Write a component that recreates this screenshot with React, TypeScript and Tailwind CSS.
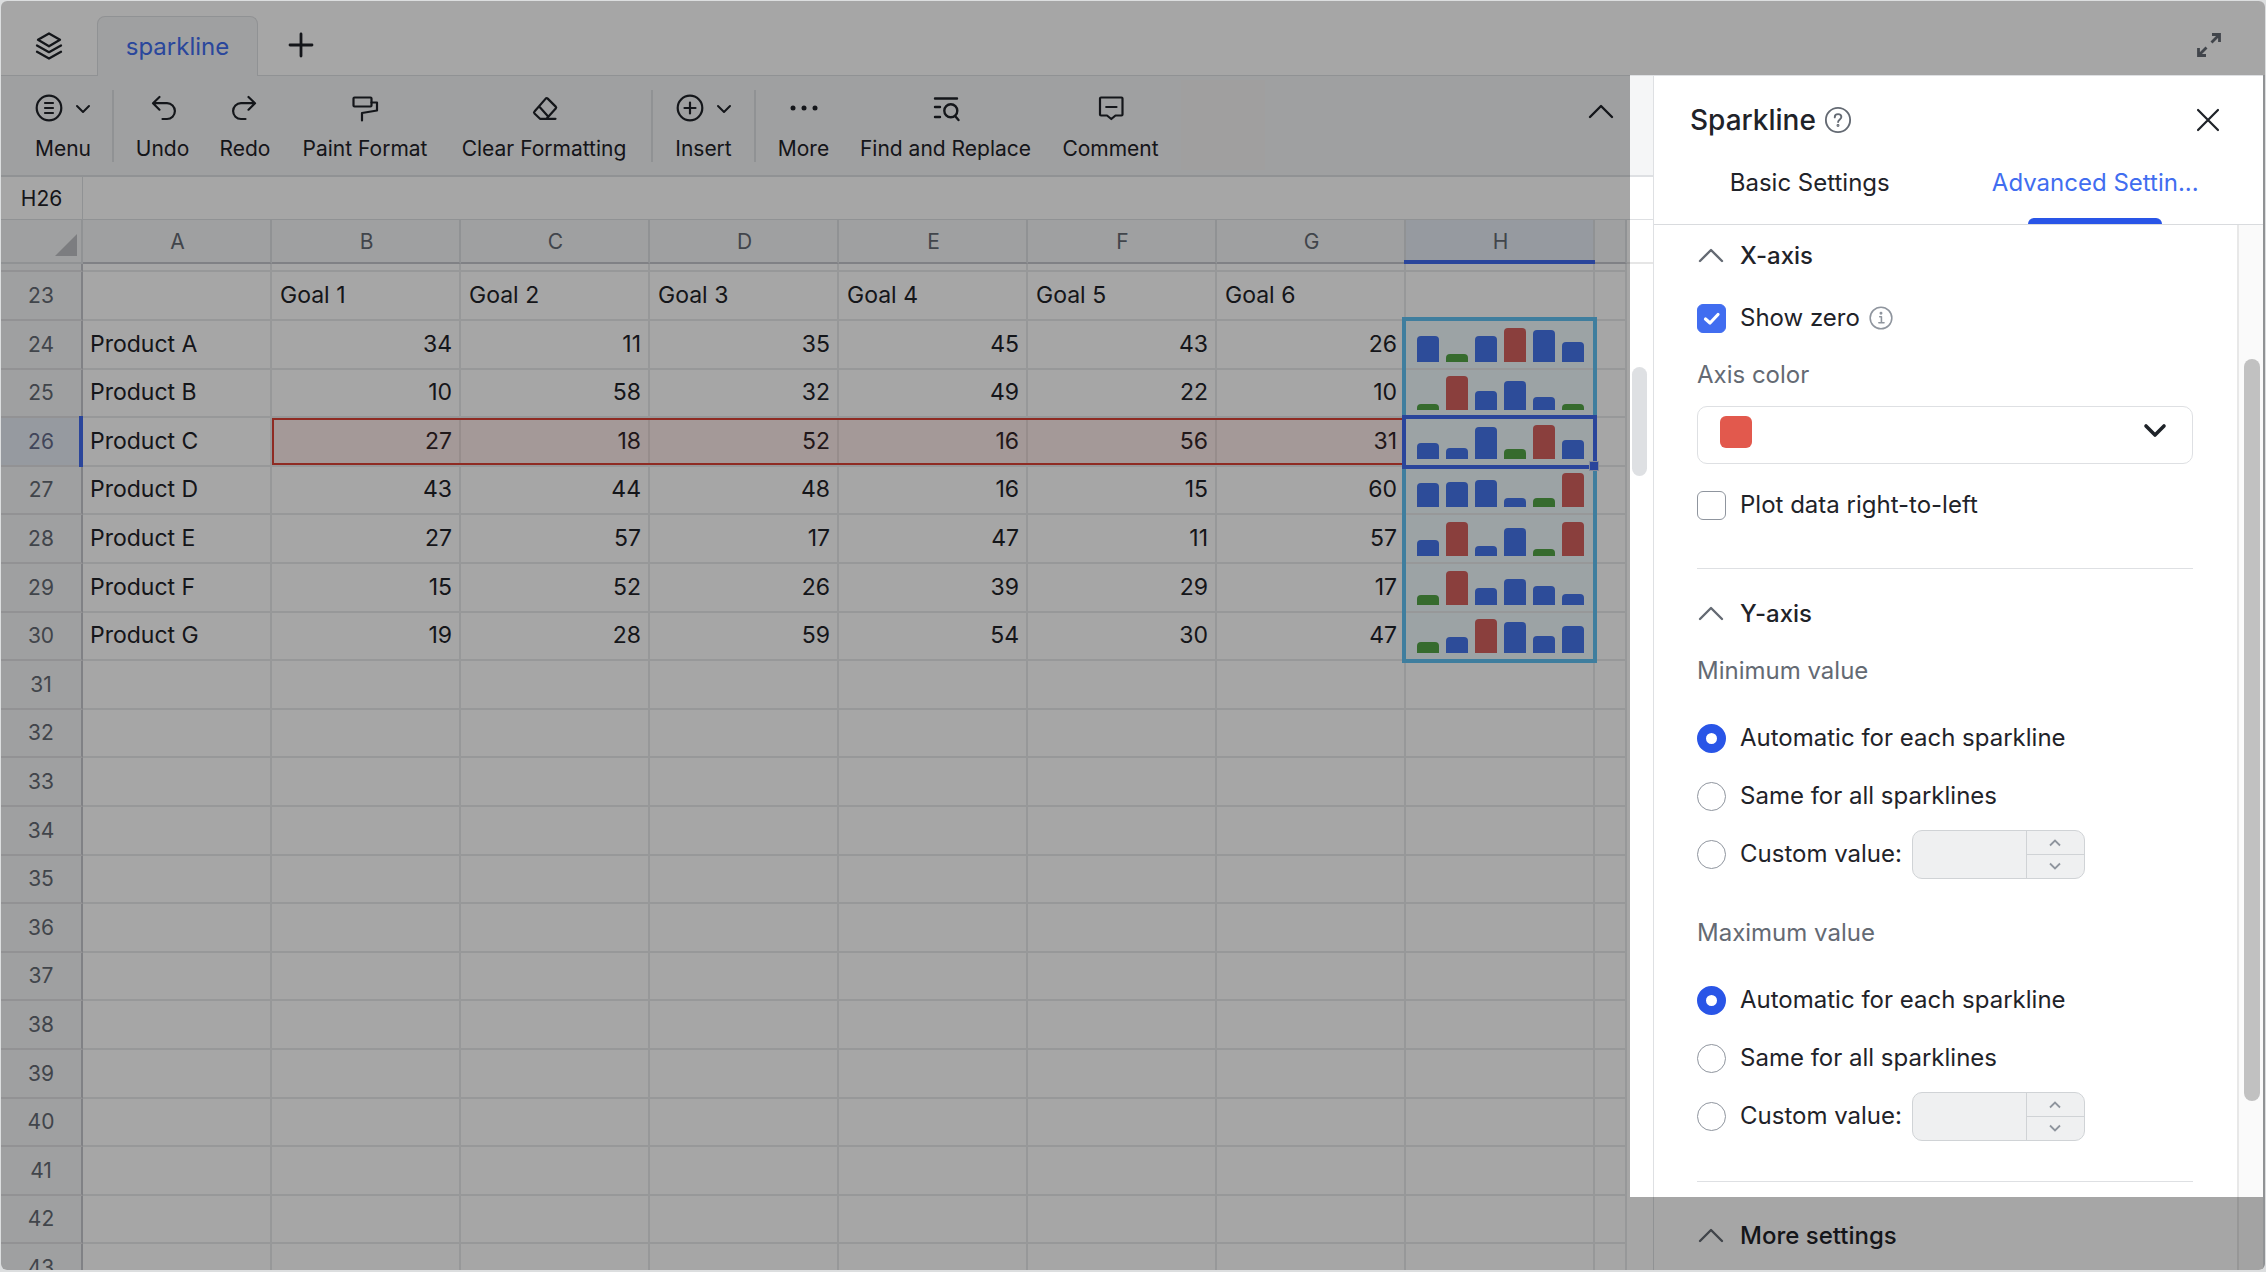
import { useState } from "react";
import type { ReactNode } from "react";
import clsx from "clsx";

const columns = ["A", "B", "C", "D", "E", "F", "G", "H"];

const products = [
  { name: "Product A", values: [34, 11, 35, 45, 43, 26] },
  { name: "Product B", values: [10, 58, 32, 49, 22, 10] },
  { name: "Product C", values: [27, 18, 52, 16, 56, 31] },
  { name: "Product D", values: [43, 44, 48, 16, 15, 60] },
  { name: "Product E", values: [27, 57, 17, 47, 11, 57] },
  { name: "Product F", values: [15, 52, 26, 39, 29, 17] },
  { name: "Product G", values: [19, 28, 59, 54, 30, 47] },
];

const emptyRows = Array.from({ length: 13 }, (_, i) => 31 + i);

function Icon({
  size = 30,
  stroke = 2,
  className,
  children,
}: {
  size?: number;
  stroke?: number;
  className?: string;
  children: ReactNode;
}) {
  return (
    <svg
      width={size}
      height={size}
      viewBox="0 0 30 30"
      fill="none"
      stroke="currentColor"
      strokeWidth={stroke}
      strokeLinecap="round"
      strokeLinejoin="round"
      className={clsx("shrink-0", className)}
      aria-hidden="true"
    >
      {children}
    </svg>
  );
}

function ChevronDown() {
  return (
    <svg width="18" height="12" viewBox="0 0 18 12" fill="none" stroke="currentColor" strokeWidth="2" aria-hidden="true">
      <path d="M3 4l6 6 6-6" strokeLinecap="round" strokeLinejoin="round" />
    </svg>
  );
}

function ChevronUp({ className }: { className?: string }) {
  return (
    <svg
      width="28"
      height="18"
      viewBox="0 0 28 18"
      fill="none"
      stroke="currentColor"
      strokeWidth="2.4"
      strokeLinecap="round"
      strokeLinejoin="round"
      className={className}
      aria-hidden="true"
    >
      <path d="M3 14L14 3l11 11" />
    </svg>
  );
}

function Sparkline({ values }: { values: number[] }) {
  const max = Math.max(...values);
  const min = Math.min(...values);

  return (
    <svg width="167" height="34" viewBox="0 0 167 34" className="ml-[11px] block" aria-hidden="true">
      {values.map((value, i) => {
        const h = Math.round((value / max) * 34);
        const fill = value === max ? "#d4615e" : value === min ? "#53a548" : "#4576eb";
        const x = i * 29;
        return (
          <path
            key={i}
            fill={fill}
            d={`M${x} 34V${34 - h + 4}q0-4 4-4h14q4 0 4 4V34z`}
          />
        );
      })}
    </svg>
  );
}

function Tool({
  label,
  width,
  menu,
  children,
}: {
  label: string;
  width: string;
  menu?: boolean;
  children: ReactNode;
}) {
  return (
    <button type="button" className={clsx("flex flex-col items-center gap-[13px]", width)}>
      <span className={clsx("flex h-[30px] items-center", menu && "gap-[10px]")}>
        {children}
        {menu && <ChevronDown />}
      </span>
      <span className="whitespace-nowrap text-[21px] leading-[26px]">{label}</span>
    </button>
  );
}

function Separator() {
  return <div className="mt-[14px] h-[72px] w-[2px] bg-[#dee0e3]" />;
}

function Toolbar() {
  return (
    <div className="flex h-[101px] border-b-2 border-[#dee0e3] bg-[#f5f6f7]">
      <div className="flex flex-1 items-start pl-[35px]">
        <div className="flex gap-[22px]">
          <div className="pt-[17px]">
            <Tool label="Menu" width="w-[54px]" menu>
              <Icon stroke={2.2}>
                <circle cx="15" cy="15" r="12.3" />
                <path d="M11 10h8M11 15h8M11 20h8" />
              </Icon>
            </Tool>
          </div>
          <Separator />
          <div className="flex gap-[30px] pt-[17px]">
            <Tool label="Undo" width="w-[53px]">
              <Icon stroke={2.2}>
                <path d="M11.5 4L5 10.2l6.500 6.500M5.500 10.200H19a7.900 7.900 0 0 1 0 15.800h-4.500" />
              </Icon>
            </Tool>
            <Tool label="Redo" width="w-[52px]">
              <Icon stroke={2.2}>
                <path d="M18.500 4L25 10.200l-6.500 6.500M24.500 10.200H11a7.900 7.900 0 0 0 0 15.800h4.500" />
              </Icon>
            </Tool>
            <Tool label="Paint Format" width="w-[128px]">
              <Icon stroke={2.2}>
                <rect x="3.500" y="4.500" width="18" height="9" rx="1" />
                <path d="M21.500 9.500h5.500v8l-15 2.500v7.500" />
              </Icon>
            </Tool>
            <Tool label="Clear Formatting" width="w-[170px]">
              <Icon stroke={2.2}>
                <path d="M16.700 5.600q1-1 2 0l8 8q1 1 0 2L17.500 25.800H11L5.500 20.500q-1-1 0-2z M10.200 13.500l8.500 9.500M11 25.800h15.500" />
              </Icon>
            </Tool>
          </div>
          <Separator />
          <div className="pt-[17px]">
            <Tool label="Insert" width="w-[57px]" menu>
              <Icon stroke={2.2}>
                <circle cx="15" cy="15" r="12.3" />
                <path d="M15 9.500v11M9.500 15h11" />
              </Icon>
            </Tool>
          </div>
          <Separator />
          <div className="flex gap-[30px] pt-[17px]">
            <Tool label="More" width="w-[51px]">
              <Icon className="fill-current stroke-none">
                <circle cx="4" cy="15" r="2.500" />
                <circle cx="15" cy="15" r="2.500" />
                <circle cx="26" cy="15" r="2.500" />
              </Icon>
            </Tool>
            <Tool label="Find and Replace" width="w-[173px]">
              <Icon stroke={2.4}>
                <path d="M4 5.500h22M4 14h5M4 24h5M24.500 23.500l3 3.500" />
                <circle cx="19.800" cy="17.800" r="6.500" />
              </Icon>
            </Tool>
            <Tool label="Comment" width="w-[97px]">
              <Icon stroke={2.2}>
                <path d="M5 4.500h20.500a1 1 0 0 1 1 1V21.500a1 1 0 0 1-1 1h-6l-4.200 3.500-4.300-3.500H5a1 1 0 0 1-1-1V5.500a1 1 0 0 1 1-1z M10.200 14h10.300" />
              </Icon>
            </Tool>
          </div>
          <div className="mt-1 h-[90px] w-[84px] bg-[#f6f5f4]" />
        </div>
      </div>
      <button type="button" aria-label="Collapse toolbar" className="mr-[38px] self-start pt-[27px]">
        <ChevronUp />
      </button>
    </div>
  );
}

const cell = "relative border-r-2 border-b-2 border-[#e9eaeb] p-0";
const rowHead = "relative border-r-2 border-b-2 border-b-[#e0e1e3] border-r-[#c5c6cc] p-0 text-center text-[21px] font-normal";

// Row heights cycle so that five rows take 243px.
const heightOf = (row: number) => ((row - 24) % 5 === 1 || (row - 24) % 5 === 3 ? "h-12" : "h-[49px]");

function Sheet() {
  return (
    <div className="flex min-h-0 flex-1">
      <div className="min-w-0 flex-1 overflow-hidden">
        <table className="w-full table-fixed border-separate border-spacing-0 text-[23px] leading-7">
          <colgroup>
            <col className="w-[82px]" />
            {columns.map((c) => (
              <col key={c} className="w-[189px]" />
            ))}
            <col />
          </colgroup>
          <thead>
            <tr className="h-11 bg-[#f5f6f7] text-[21px] text-[#646a73]">
              <th className="relative border-r-2 border-b-2 border-[#dee0e3] p-0" aria-label="Select all">
                <svg width="22" height="22" className="absolute right-1 bottom-[6px]" aria-hidden="true">
                  <path d="M22 0v22H0z" fill="#bfc1c5" />
                </svg>
              </th>
              {columns.map((c) => (
                <th
                  key={c}
                  scope="col"
                  className={clsx(
                    "relative border-r-2 border-r-[#dee0e3] border-b-2 border-b-[#c5c6cc] p-0 pt-[2px] pl-[2px] font-normal",
                    c === "H" && "bg-[#e6edf6]",
                  )}
                >
                  {c}
                  {c === "H" && <span className="absolute -bottom-[2px] -left-[2px] z-10 h-1 w-[191px] bg-[#416aee]" />}
                </th>
              ))}
              <th className="border-r-2 border-b-2 border-r-[#dee0e3] border-b-[#c5c6cc] p-0" />
            </tr>
          </thead>
          <tbody className="text-[#1f2329]">
            <tr className="h-2">
              <td className={clsx(rowHead, "bg-[#f5f6f7]")} />
              {columns.map((c) => (
                <td key={c} className={cell} />
              ))}
              <td className={cell} />
            </tr>
            <tr className="h-[49px]">
              <th scope="row" className={clsx(rowHead, "bg-[#f5f6f7] text-[#646a73]")}>23</th>
              <td className={cell} />
              {[1, 2, 3, 4, 5, 6].map((n) => (
                <td key={n} className={clsx(cell, "pb-[2px] pl-2")}>Goal {n}</td>
              ))}
              <td className={cell} />
              <td className={cell} />
            </tr>
            {products.map((p, i) => {
              const row = 24 + i;
              const active = row === 26;
              return (
                <tr key={row} className={heightOf(row)}>
                  <th
                    scope="row"
                    className={clsx(rowHead, active ? "bg-[#e6edf6] text-[#646a8a]" : "bg-[#f5f6f7] text-[#646a73]")}
                  >
                    {row}
                    {active && <span className="absolute -top-[2px] -right-[2px] z-10 h-[51px] w-1 bg-[#416aee]" />}
                  </th>
                  <td className={clsx(cell, "pb-[2px] pl-[7px]")}>{p.name}</td>
                  {p.values.map((v, j) => (
                    <td key={j} className={clsx(cell, "pr-[7px] pb-[2px] text-right")}>
                      {v}
                      {active && j === 0 && (
                        <span className="absolute top-0 left-0 z-10 h-[47px] w-[1134px] border-2 border-[#dc4236] bg-[#e14134]/10" />
                      )}
                    </td>
                  ))}
                  <td className={clsx(cell, "bg-[#f0fafe] pb-[6px] align-bottom")}>
                    <Sparkline values={p.values} />
                    {i === 0 && (
                      <span className="absolute -top-1 -left-1 z-10 h-[346px] w-[195px] border-4 border-[#61c2f3]" />
                    )}
                    {active && (
                      <span className="absolute -top-[3px] -left-1 z-20 h-[54px] w-[195px] border-4 border-[#416aee]">
                        <span className="absolute -right-[6px] -bottom-[6px] size-[10px] border border-[#c9d4f0] bg-[#416aee]" />
                      </span>
                    )}
                  </td>
                  <td className={cell} />
                </tr>
              );
            })}
            {emptyRows.map((row) => (
              <tr key={row} className={heightOf(row)}>
                <th scope="row" className={clsx(rowHead, "bg-[#f5f6f7] text-[#646a73]")}>{row}</th>
                {columns.map((c) => (
                  <td key={c} className={cell} />
                ))}
                <td className={cell} />
              </tr>
            ))}
          </tbody>
        </table>
      </div>
      <div className="w-[26px]">
        <div className="h-11 border-b-2 border-[#e6e6e6]" />
        <div className="mt-[103px] ml-[5px] h-[109px] w-[15px] rounded-full bg-[#dee0e3]" />
      </div>
    </div>
  );
}

function SectionTitle({ title, className }: { title: string; className: string }) {
  return (
    <button type="button" className={clsx("flex w-full items-center gap-[15px] pt-[2px] text-left font-medium", className)}>
      <ChevronUp className="text-[#646a73]" />
      {title}
    </button>
  );
}

function CheckRow({ label, defaultChecked, className, children }: {
  label: string;
  defaultChecked?: boolean;
  className: string;
  children?: ReactNode;
}) {
  return (
    <div className={clsx("flex items-center gap-2", className)}>
      <label className="flex items-center gap-[14px]">
        <span className="grid size-[29px]">
          <input
            type="checkbox"
            defaultChecked={defaultChecked}
            className="peer col-start-1 row-start-1 size-[29px] appearance-none rounded-md border border-[#8f959e] bg-white checked:border-[#416df0] checked:bg-[#416df0]"
          />
          <svg
            viewBox="0 0 29 29"
            className="pointer-events-none invisible col-start-1 row-start-1 size-[29px] peer-checked:visible"
            fill="none"
            stroke="white"
            strokeWidth="3.2"
            strokeLinecap="round"
            strokeLinejoin="round"
            aria-hidden="true"
          >
            <path d="M8.500 15l4.500 4 8-8.500" />
          </svg>
        </span>
        {label}
      </label>
      {children}
    </div>
  );
}

function ValueGroup({ title, name, className }: { title: string; name: string; className?: string }) {
  const [selected, setSelected] = useState("auto");
  const options = [
    { id: "auto", label: "Automatic for each sparkline" },
    { id: "same", label: "Same for all sparklines" },
    { id: "custom", label: "Custom value:" },
  ];

  return (
    <fieldset className={className}>
      <legend className="mb-6 h-7 text-[#646a73]">{title}</legend>
      {options.map(({ id, label }) => (
        <div key={id} className="flex h-[58px] items-center gap-[10px]">
          <label className="flex items-center gap-[14px]">
            <input
              type="radio"
              name={name}
              checked={selected === id}
              onChange={() => setSelected(id)}
              className="size-[29px] appearance-none rounded-full border border-[#8f959e] bg-white checked:border-9 checked:border-[#2955e7]"
            />
            {label}
          </label>
          {id === "custom" && (
            <div className="flex h-[49px] w-[173px] overflow-hidden rounded-[10px] border border-[#d0d3d6] bg-[#eff0f1] text-[#8f959e]">
              <input type="text" disabled aria-label={`${title} custom`} className="min-w-0 flex-1" />
              <div className="flex w-[58px] flex-col border-l border-[#d0d3d6]">
                <button type="button" disabled aria-label="Increase" className="flex flex-1 items-center justify-center border-b border-[#d0d3d6]">
                  <svg width="14" height="9" viewBox="0 0 14 9" fill="none" stroke="currentColor" strokeWidth="1.8" aria-hidden="true">
                    <path d="M2 7.500l5-5 5 5" />
                  </svg>
                </button>
                <button type="button" disabled aria-label="Decrease" className="flex flex-1 items-center justify-center">
                  <svg width="14" height="9" viewBox="0 0 14 9" fill="none" stroke="currentColor" strokeWidth="1.8" aria-hidden="true">
                    <path d="M2 1.500l5 5 5-5" />
                  </svg>
                </button>
              </div>
            </div>
          )}
        </div>
      ))}
    </fieldset>
  );
}

function SettingsPanel() {
  return (
    <aside className="flex w-[612px] shrink-0 flex-col border-x border-r-2 border-[#dee0e3] bg-white text-2xl leading-7">
      <header className="flex h-[88px] items-center pr-[42px] pl-9 text-[28px] font-medium">
        <h2>Sparkline</h2>
        <button type="button" aria-label="Help" className="ml-2 text-[#646a73]">
          <Icon size={28}>
            <circle cx="15" cy="15" r="13" />
            <path d="M11.500 12.200c0-2.200 1.500-3.500 3.600-3.500s3.500 1.300 3.500 3.100c0 2.500-3.500 2.700-3.500 5.400" />
            <circle cx="15" cy="20.800" r=".6" />
          </Icon>
        </button>
        <button type="button" aria-label="Close" className="ml-auto">
          <Icon size={26} stroke={2.6}>
            <path d="M3.500 3.500l23 23M26.500 3.500l-23 23" />
          </Icon>
        </button>
      </header>
      <div role="tablist" className="flex h-[61px] border-b border-[#d9dbde] pr-[25px] pl-[13px]">
        <button type="button" role="tab" aria-selected="false" className="flex flex-1 justify-center pt-[5px]">
          Basic Settings
        </button>
        <button
          type="button"
          role="tab"
          aria-selected="true"
          className="flex flex-1 flex-col items-center justify-between pt-[5px] text-[#416df0]"
        >
          Advanced Settin...
          <span className="h-[6px] w-[134px] rounded-t-md bg-[#2955e7]" />
        </button>
      </div>

      <div className="flex min-h-0 flex-1 overflow-hidden">
        <div className="flex-1 pr-11 pl-[43px]">
          <SectionTitle title="X-axis" className="h-[60px]" />
          <CheckRow label="Show zero" defaultChecked className="h-[66px]">
            <Icon size={26} stroke={1.8} className="text-[#8f959e]">
              <circle cx="15" cy="15" r="12.500" />
              <path d="M13.500 13.500h2v7M12.500 20.500h6" />
              <circle cx="15" cy="9.500" r=".8" />
            </Icon>
          </CheckRow>
          <p className="flex h-[46px] items-center pt-[2px] text-[#646a73]">Axis color</p>
          <button
            type="button"
            aria-label="Axis color"
            className="mt-[9px] flex h-[58px] w-full items-start rounded-[10px] border border-[#dee0e3] pt-[9px] pr-6 pl-[22px]"
          >
            <span className="size-8 rounded-md bg-[#e2594d]" />
            <svg width="26" height="18" viewBox="0 0 26 18" fill="none" className="mt-[6px] ml-auto" aria-hidden="true">
              <path d="M4 4l9 9 9-9" stroke="currentColor" strokeWidth="3.6" strokeLinecap="round" strokeLinejoin="round" />
            </svg>
          </button>
          <CheckRow label="Plot data right-to-left" className="h-[82px]" />
          <hr className="mt-[22px] border-[#dee0e3]" />
          <SectionTitle title="Y-axis" className="h-[88px]" />
          <ValueGroup title="Minimum value" name="min-value" />
          <ValueGroup title="Maximum value" name="max-value" className="mt-9" />
          <hr className="mt-9 border-[#dee0e3]" />
          <SectionTitle title="More settings" className="h-[106px]" />
        </div>
        <div className="w-[26px] border-l-2 border-[#e8e8e8] bg-[#fafafa] pl-[5px]">
          <div className="mt-[134px] h-[742px] w-4 rounded-full bg-[#c1c1c1]" />
        </div>
      </div>
    </aside>
  );
}

export default function App() {
  return (
    <div className="h-screen border border-b-2 border-[#dcdedf] bg-[#dcdedf] font-['Inter',sans-serif] text-[#1f2329]">
      <div className="relative flex h-full flex-col overflow-hidden rounded-md bg-white">
        <nav className="flex h-[75px] shrink-0 items-end">
          <div className="flex h-full w-24 items-center justify-center border-b border-[#dee0e3] pt-[15px]">
            <button type="button" aria-label="Sheets">
              <Icon stroke={2.3}>
                <path d="M15 2.500L26 8.800 15 15.300 4 8.800z M3 14.500l12 6.700 12-6.700M3 20.800l12 6.700 12-6.700" />
              </Icon>
            </button>
          </div>
          <a
            href="#sparkline"
            className="flex h-[60px] w-[161px] items-center justify-center rounded-t-lg border border-b-0 border-[#dee0e3] bg-[#f5f6f7] text-2xl text-[#416df0]"
          >
            sparkline
          </a>
          <div className="flex h-full flex-1 items-center border-b border-[#dee0e3] pt-[14px] pr-[41px] pl-[28px]">
            <button type="button" aria-label="Add sheet">
              <Icon stroke={2.8}>
                <path d="M15 4v22M4 15h22" />
              </Icon>
            </button>
            <button type="button" aria-label="Full screen" className="ml-auto text-[#646a73]">
              <Icon stroke={2.8} className="[stroke-linecap:butt] [stroke-linejoin:miter]">
                <path d="M18 4.500h7.500V12M25.500 4.500l-8 8M12 25.500H4.500V18M4.500 25.500l8-8" />
              </Icon>
            </button>
          </div>
        </nav>

        <div className="flex min-h-0 flex-1">
          <main className="flex min-w-0 flex-1 flex-col">
            <Toolbar />
            <div className="flex h-[43px] shrink-0 items-center border-b border-[#dee0e3] text-[21px]">
              <input
                type="text"
                aria-label="Cell reference"
                defaultValue="H26"
                className="h-full w-[82px] border-r border-[#dee0e3] text-center"
              />
              <input type="text" aria-label="Formula" className="h-full flex-1" />
            </div>
            <Sheet />
          </main>
          <SettingsPanel />
        </div>

        {/* dims everything around the highlighted settings */}
        <div className="pointer-events-none absolute top-[74px] right-[2px] bottom-[73px] z-30 w-[633px] shadow-[0_0_0_3000px_rgba(0,0,0,0.35)]" />
      </div>
    </div>
  );
}
